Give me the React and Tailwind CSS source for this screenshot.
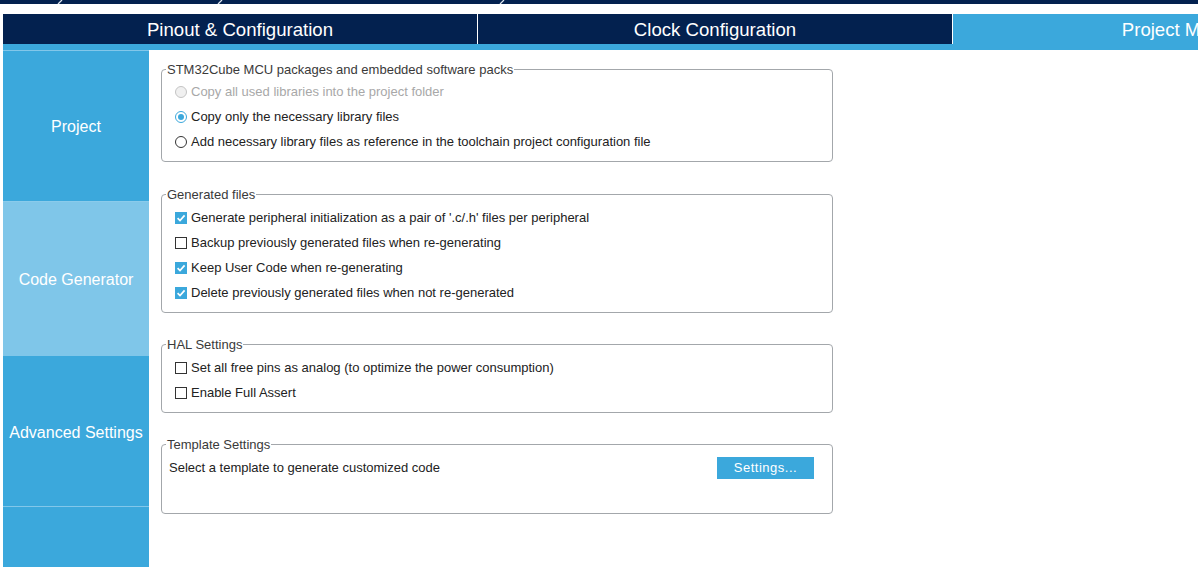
import React from 'react'

const FONT = { fontFamily: '"Liberation Sans", Arial, sans-serif' }

function Check({ checked }) {
  if (!checked) {
    return <span className="inline-block w-[12px] h-[12px] border border-[#333] bg-white shrink-0" />
  }
  return (
    <span className="inline-flex w-[12px] h-[12px] bg-[#3ba8dc] shrink-0 items-center justify-center">
      <svg width="12" height="12" viewBox="0 0 12 12">
        <path d="M2.6 6.1 L5 8.5 L9.6 3.4" fill="none" stroke="#fff" strokeWidth="1.7" />
      </svg>
    </span>
  )
}

function Radio({ selected, disabled }) {
  if (disabled) {
    return <span className="inline-block w-[12px] h-[12px] rounded-full border border-[#c4c4c4] bg-[#f0f0f0] shrink-0" />
  }
  if (selected) {
    return (
      <span className="inline-flex w-[12px] h-[12px] rounded-full border border-[#3ba8dc] bg-white shrink-0 items-center justify-center">
        <span className="w-[6px] h-[6px] rounded-full bg-[#3ba8dc]" />
      </span>
    )
  }
  return <span className="inline-block w-[12px] h-[12px] rounded-full border border-[#333] bg-white shrink-0" />
}

function Row({ control, children, muted }) {
  return (
    <div className="h-[25px] flex items-center pl-[9px]">
      {control}
      <span className={'ml-[4px] text-[13px] ' + (muted ? 'text-[#a8a8a8]' : 'text-[#222]')}>{children}</span>
    </div>
  )
}

function Group({ title, children, className = '' }) {
  return (
    <fieldset className={'w-[672px] border border-[#a3a7ab] rounded-[4px] pl-[4px] ' + className}>
      <legend className="px-[1px] text-[13px] leading-[15px] text-[#3a3a3a]">{title}</legend>
      {children}
    </fieldset>
  )
}

function TopStrip() {
  return (
    <svg width="1198" height="4" className="block bg-[#03214f]">
      <line x1="58" y1="4" x2="62" y2="0" stroke="#dfe6ee" strokeWidth="1.3" />
      <line x1="218" y1="4" x2="222" y2="0" stroke="#dfe6ee" strokeWidth="1.3" />
      <line x1="500" y1="4" x2="504" y2="0" stroke="#dfe6ee" strokeWidth="1.3" />
    </svg>
  )
}

function Tabs() {
  const tabs = [
    { label: 'Pinout & Configuration', active: false },
    { label: 'Clock Configuration', active: false },
    { label: 'Project Manager', active: true },
  ]
  return (
    <div className="mt-[10px] ml-[3px] flex gap-[1px] bg-white overflow-hidden">
      {tabs.map(t => (
        <div
          key={t.label}
          className={'w-[474px] h-[30px] pt-[2px] shrink-0 flex items-center justify-center text-white text-[18.6px] ' + (t.active ? 'bg-[#3ba8dc]' : 'bg-[#03214f]')}
        >
          {t.label}
        </div>
      ))}
    </div>
  )
}

function Sidebar() {
  return (
    <div className="w-[146px] shrink-0 flex flex-col bg-[#3ba8dc] text-white text-[16px] border-t border-[#82c7ea]">
      <div className="h-[151px] pt-[2px] flex items-center justify-center border-b border-[#8acbeb]">Project</div>
      <div className="h-[154px] pt-[2px] flex items-center justify-center bg-[#7fc6e9]">Code Generator</div>
      <div className="h-[151px] pt-[3px] flex items-center justify-center border-b border-[#82c7ea]">Advanced Settings</div>
      <div className="flex-1" />
    </div>
  )
}

export default function App() {
  return (
    <div className="w-[1198px] h-[567px] overflow-hidden bg-white flex flex-col" style={FONT}>
      <TopStrip />
      <Tabs />
      <div className="ml-[3px] h-[6px] bg-[#3ba8dc]" />
      <div className="flex flex-1 ml-[3px]">
        <Sidebar />
        <div className="pl-[12px] pt-[12px] flex flex-col">
          <Group title="STM32Cube MCU packages and embedded software packs">
            <div className="pt-[2px] pb-[7px]">
              <Row control={<Radio disabled />} muted>Copy all used libraries into the project folder</Row>
              <Row control={<Radio selected />}>Copy only the necessary library files</Row>
              <Row control={<Radio />}>Add necessary library files as reference in the toolchain project configuration file</Row>
            </div>
          </Group>
          <Group title="Generated files" className="mt-[25px]">
            <div className="pt-[3px] pb-[7px]">
              <Row control={<Check checked />}>Generate peripheral initialization as a pair of '.c/.h' files per peripheral</Row>
              <Row control={<Check />}>Backup previously generated files when re-generating</Row>
              <Row control={<Check checked />}>Keep User Code when re-generating</Row>
              <Row control={<Check checked />}>Delete previously generated files when not re-generated</Row>
            </div>
          </Group>
          <Group title="HAL Settings" className="mt-[24px]">
            <div className="pt-[3px] pb-[7px]">
              <Row control={<Check />}>Set all free pins as analog (to optimize the power consumption)</Row>
              <Row control={<Check />}>Enable Full Assert</Row>
            </div>
          </Group>
          <Group title="Template Settings" className="mt-[24px]">
            <div className="pt-[3px] pb-[33px]">
              <div className="h-[25px] flex items-center pl-[3px] pr-[18px]">
                <span className="text-[13px] text-[#222]">Select a template to generate customized code</span>
                <button className="ml-auto w-[97px] h-[22px] bg-[#3ba8dc] text-white text-[13px] tracking-[0.5px]">Settings...</button>
              </div>
            </div>
          </Group>
        </div>
      </div>
    </div>
  )
}
